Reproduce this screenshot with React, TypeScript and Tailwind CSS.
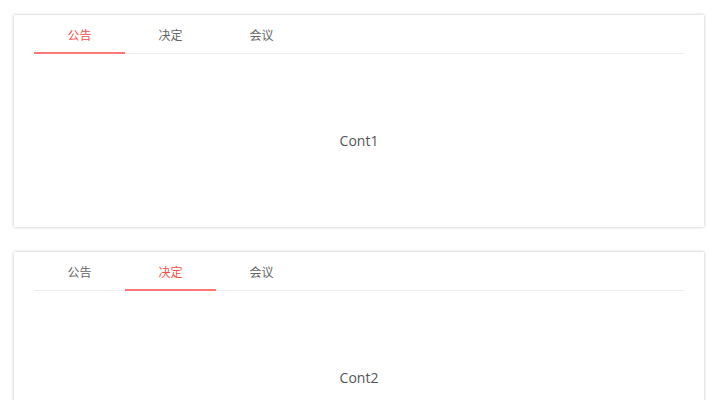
import { useState } from "react";

const tabs = ["公告", "决定", "会议"];

const TabCard = ({ initial }: { initial: number }) => {
  const [active, setActive] = useState(initial);
  return (
    <div className="w-[690px] bg-white shadow-[0_0_3px_rgba(0,0,0,0.25)] px-[20px]">
      <div className="flex border-b border-[#eeeeee]">
        {tabs.map((t, i) => (
          <button
            key={t}
            type="button"
            onClick={() => setActive(i)}
            className={
              "relative w-[91px] h-[38px] pt-[3px] flex items-center justify-center text-[12px] " +
              (i === active ? "text-[#f5504a]" : "text-[#666]")
            }
          >
            {t}
            {i === active && <span className="absolute left-0 right-0 -bottom-px h-[2px] bg-[#f77]" />}
          </button>
        ))}
      </div>
      <div className="h-[173px] flex items-center justify-center text-[14px] text-[#555]">
        Cont{active + 1}
      </div>
    </div>
  );
};

export default function App() {
  return (
    <div
      className="min-h-[400px] bg-white pl-[14px] pt-[15px] flex flex-col gap-[25px]"
      style={{ fontFamily: '"Open Sans", "Noto Sans CJK SC", sans-serif' }}
    >
      <TabCard initial={0} />
      <TabCard initial={1} />
    </div>
  );
}
